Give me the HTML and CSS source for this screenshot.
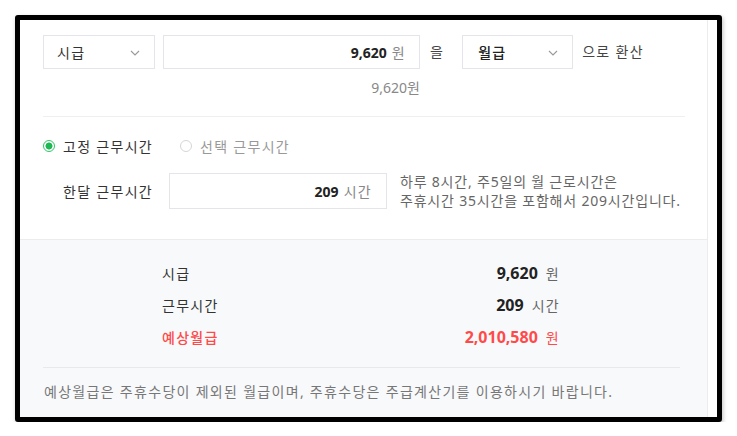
FILE: index.html
```html
<!DOCTYPE html>
<html lang="ko">
<head>
<meta charset="utf-8">
<link rel="stylesheet" href="styles.css">
</head>
<body>
<div class="frame">
  <div class="card">
    <div class="top">
      <div class="convert-row">
        <div class="select sel-from">
          <span>시급</span>
          <svg class="chev" width="10" height="6" viewBox="0 0 10 6"><path d="M1 1l4 4 4-4" fill="none" stroke="#999" stroke-width="1.1"/></svg>
        </div>
        <div class="amount-col">
          <div class="input amount"><b>9,620</b><span class="unit">원</span></div>
          <div class="helper">9,620원</div>
        </div>
        <span class="word w1">을</span>
        <div class="select sel-to">
          <span class="strong">월급</span>
          <svg class="chev" width="10" height="6" viewBox="0 0 10 6"><path d="M1 1l4 4 4-4" fill="none" stroke="#999" stroke-width="1.1"/></svg>
        </div>
        <span class="word w2">으로 환산</span>
      </div>
      <div class="divider"></div>
      <div class="radio-row">
        <label class="radio on"><span class="dot"></span>고정 근무시간</label>
        <label class="radio off"><span class="dot"></span>선택 근무시간</label>
      </div>
      <div class="hours-row">
        <span class="hours-label">한달 근무시간</span>
        <div class="input hours"><b>209</b><span class="unit">시간</span></div>
        <p class="desc">하루 8시간, 주5일의 월 근로시간은<br>주휴시간 35시간을 포함해서 209시간입니다.</p>
      </div>
    </div>
    <div class="result">
      <div class="res-row"><span class="res-label">시급</span><span class="res-val"><b>9,620</b><span class="unit">원</span></span></div>
      <div class="res-row"><span class="res-label">근무시간</span><span class="res-val"><b>209</b><span class="unit">시간</span></span></div>
      <div class="res-row red"><span class="res-label">예상월급</span><span class="res-val"><b>2,010,580</b><span class="unit">원</span></span></div>
      <div class="divider2"></div>
      <p class="note">예상월급은 주휴수당이 제외된 월급이며, 주휴수당은 주급계산기를 이용하시기 바랍니다.</p>
    </div>
  </div>
</div>
</body>
</html>
```

FILE: styles.css
```css
* { box-sizing: border-box; }
html, body { margin: 0; padding: 0; background: #fff; }
body {
  font-family: "Noto Sans", "Noto Sans CJK KR", sans-serif;
  color: #333;
  font-size: 14px;
  letter-spacing: 1.3px;
  padding: 15px 0 0 15px;
}
b { letter-spacing: 0; }
.frame {
  width: 707px;
  height: 407px;
  border: 5px solid #000;
  border-radius: 3px;
  box-shadow: 1px 2px 4px rgba(0,0,0,0.25);
  overflow: hidden;
  background: #fff;
}
.card {
  width: 688px;
  height: 100%;
  border-right: 1px solid #ececec;
  display: flex;
  flex-direction: column;
}
.top {
  padding: 15px 22px 0 23px;
  height: 219px;
}
.convert-row {
  display: flex;
  align-items: flex-start;
}
.select {
  height: 34px;
  border: 1px solid #e3e5ea;
  display: flex;
  align-items: center;
  justify-content: space-between;
  padding: 0 14px 0 13px;
  color: #333;
}
.sel-from { width: 112px; }
.sel-to { width: 111px; margin-left: 18px; padding-left: 15px; }
.strong { font-weight: 500; color: #222; }
.chev { margin-top: 1px; }
.amount-col {
  margin-left: 8px;
  display: flex;
  flex-direction: column;
  align-items: flex-end;
}
.input {
  height: 34px;
  border: 1px solid #e3e5ea;
  display: flex;
  align-items: center;
  justify-content: flex-end;
  padding-right: 13px;
}
.input b { font-weight: 700; color: #222; }
.input .unit { color: #888; margin-left: 5px; }
.amount { width: 257px; }
.helper {
  color: #888;
  font-size: 14px;
  letter-spacing: 0;
  margin-top: 9px;
  line-height: 20px;
}
.word { line-height: 34px; color: #444; }
.w1 { margin-left: 10px; }
.w2 { margin-left: 9px; }
.divider {
  height: 1px;
  background: #efefef;
  margin-top: 18px;
}
.radio-row {
  display: flex;
  gap: 27px;
  margin-top: 19px;
  height: 20px;
  align-items: center;
}
.radio {
  display: flex;
  align-items: center;
  gap: 8px;
}
.radio .dot {
  width: 12px;
  height: 12px;
  border-radius: 50%;
  display: inline-block;
}
.radio.on { color: #333; }
.radio.on .dot {
  border: 1.5px solid #2fc866;
  background: radial-gradient(circle, #1db954 0 3.2px, #fff 3.8px);
}
.radio.off { color: #999; }
.radio.off .dot { border: 1px solid #d6d6d6; background: #fff; }
.hours-row {
  display: flex;
  align-items: center;
  margin-top: 16px;
}
.hours-label { margin-left: 20px; color: #333; width: 106px; }
.hours { width: 218px; height: 36px; padding-right: 14px; }
.desc {
  margin: 0 0 0 13px;
  font-size: 14px;
  letter-spacing: 0.8px;
  line-height: 19px;
  color: #666;
}
.result {
  flex: 1;
  background: #f8f9fb;
  border-top: 1px solid #ebecef;
  padding: 17px 27px 0 23px;
}
.res-row {
  display: flex;
  justify-content: space-between;
  align-items: center;
  height: 32px;
  padding: 0 120px 0 119px;
}
.res-label { color: #333; }
.res-val b { font-size: 16px; font-weight: 700; color: #222; }
.res-val .unit { color: #666; margin-left: 8px; }
.red .res-label, .red .res-val b, .red .res-val .unit { color: #ff4a4a; }
.red .res-label { font-weight: 500; }
.divider2 { height: 1px; background: #e8e9ec; margin-top: 14px; }
.note {
  margin: 13px 0 0 1px;
  color: #777;
  font-size: 14px;
  letter-spacing: 1.3px;
}
```
